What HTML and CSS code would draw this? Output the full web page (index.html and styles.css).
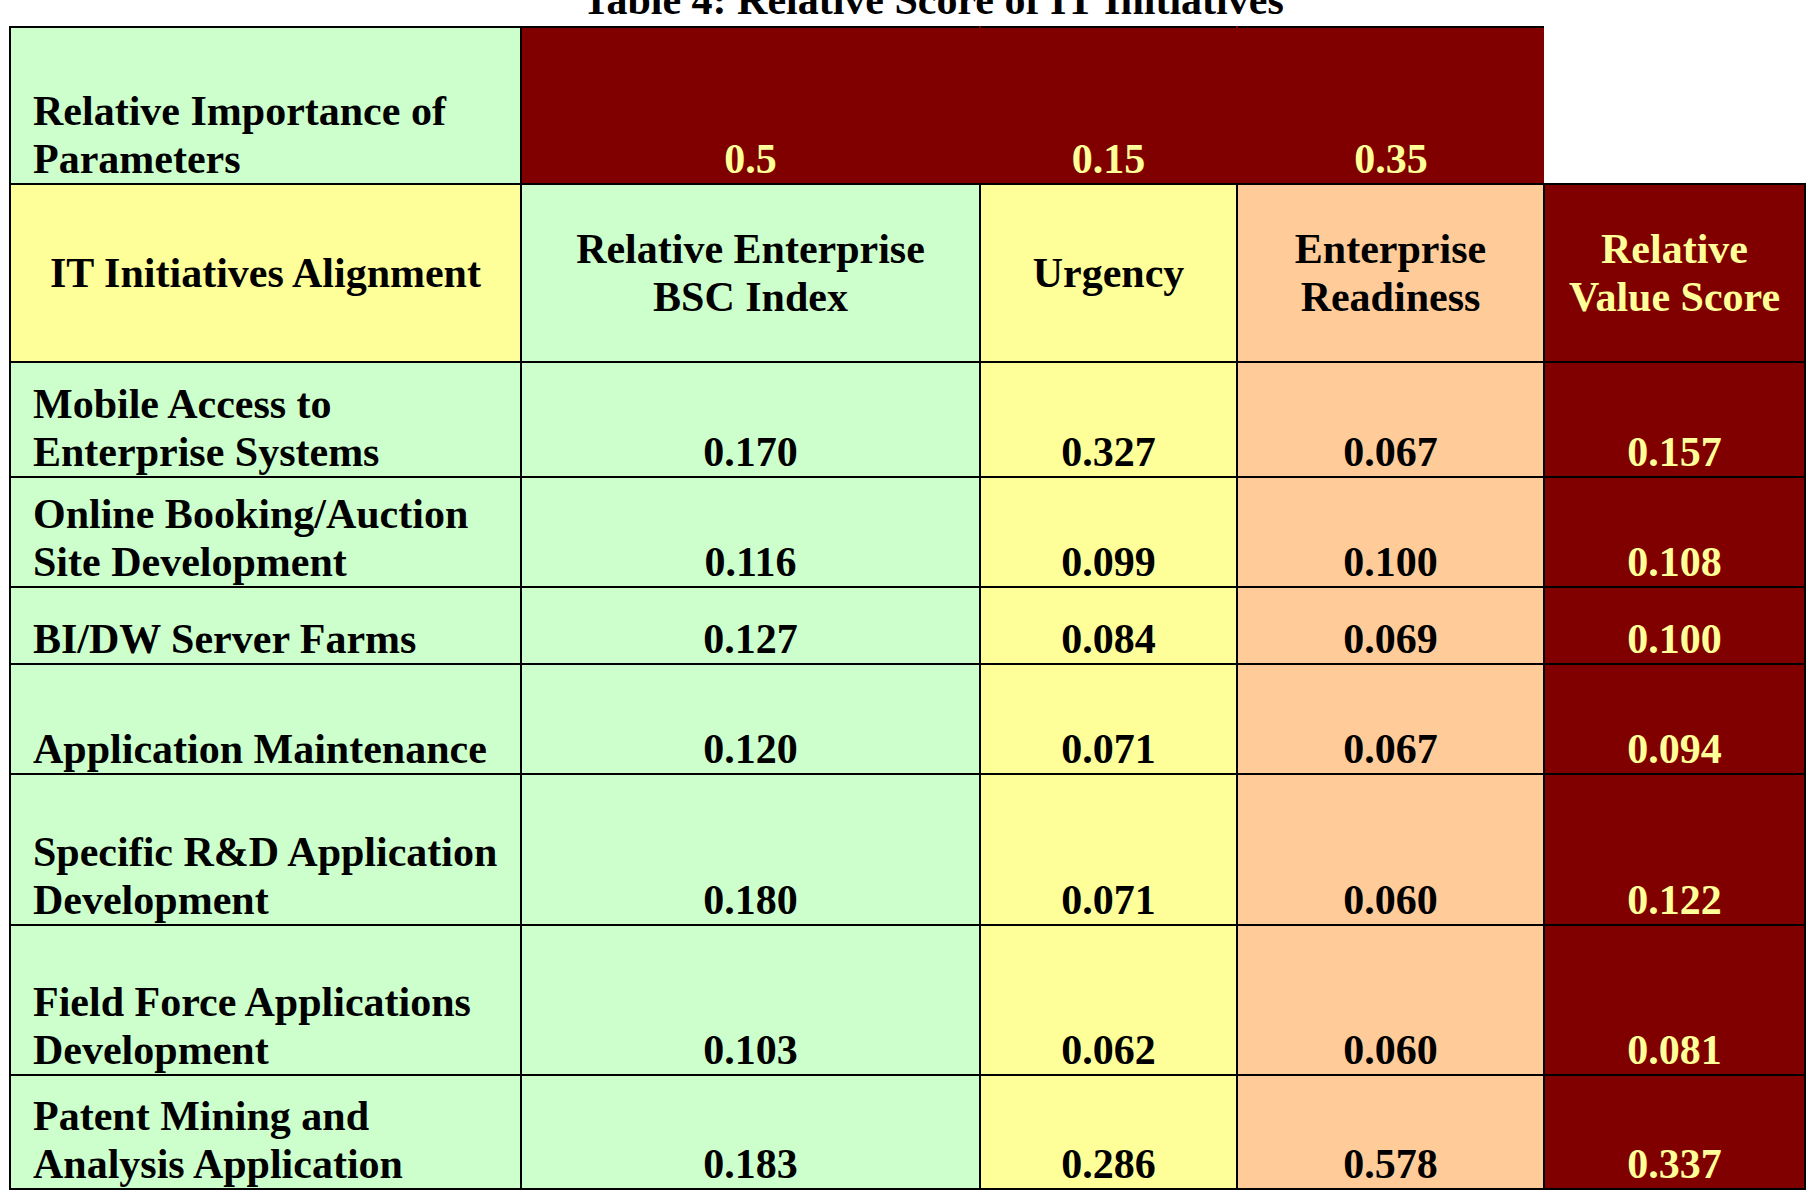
FILE: index.html
```html
<!DOCTYPE html>
<html>
<head>
<meta charset="utf-8">
<link rel="stylesheet" href="styles.css">
</head>
<body>
<div class="page">
  <div class="title">Table 4: Relative Score of IT Initiatives</div>
  <table class="scores">
    <colgroup>
      <col class="c0"><col class="c1"><col class="c2"><col class="c3"><col class="c4">
    </colgroup>
    <tr class="r-weights">
      <td class="label green">Relative Importance of<br>Parameters</td>
      <td class="weight w-first">0.5</td>
      <td class="weight w-mid">0.15</td>
      <td class="weight w-last">0.35</td>
      <td class="blank"></td>
    </tr>
    <tr class="r-head">
      <th class="yellow">IT Initiatives Alignment</th>
      <th class="green">Relative Enterprise<br>BSC Index</th>
      <th class="yellow">Urgency</th>
      <th class="peach">Enterprise<br>Readiness</th>
      <th class="maroon">Relative<br>Value Score</th>
    </tr>
    <tr class="r-a">
      <td class="label green">Mobile Access to<br>Enterprise Systems</td>
      <td class="num green">0.170</td>
      <td class="num yellow">0.327</td>
      <td class="num peach">0.067</td>
      <td class="num maroon">0.157</td>
    </tr>
    <tr class="r-b">
      <td class="label green">Online Booking/Auction<br>Site Development</td>
      <td class="num green">0.116</td>
      <td class="num yellow">0.099</td>
      <td class="num peach">0.100</td>
      <td class="num maroon">0.108</td>
    </tr>
    <tr class="r-c">
      <td class="label green">BI/DW Server Farms</td>
      <td class="num green">0.127</td>
      <td class="num yellow">0.084</td>
      <td class="num peach">0.069</td>
      <td class="num maroon">0.100</td>
    </tr>
    <tr class="r-d">
      <td class="label green">Application Maintenance</td>
      <td class="num green">0.120</td>
      <td class="num yellow">0.071</td>
      <td class="num peach">0.067</td>
      <td class="num maroon">0.094</td>
    </tr>
    <tr class="r-e">
      <td class="label green">Specific R&amp;D Application<br>Development</td>
      <td class="num green">0.180</td>
      <td class="num yellow">0.071</td>
      <td class="num peach">0.060</td>
      <td class="num maroon">0.122</td>
    </tr>
    <tr class="r-f">
      <td class="label green">Field Force Applications<br>Development</td>
      <td class="num green">0.103</td>
      <td class="num yellow">0.062</td>
      <td class="num peach">0.060</td>
      <td class="num maroon">0.081</td>
    </tr>
    <tr class="r-g">
      <td class="label green">Patent Mining and<br>Analysis Application</td>
      <td class="num green">0.183</td>
      <td class="num yellow">0.286</td>
      <td class="num peach">0.578</td>
      <td class="num maroon">0.337</td>
    </tr>
  </table>
</div>
</body>
</html>
```

FILE: styles.css
```css
html, body {
  margin: 0;
  padding: 0;
  background: #ffffff;
}

.page {
  padding-left: 9px;
  font-family: "Liberation Serif", "Times New Roman", serif;
  font-weight: bold;
  font-size: 42px;
  color: #000000;
  overflow: hidden;
  height: 1198px;
}

.title {
  width: 1797px;
  box-sizing: border-box;
  padding-left: 51px;
  text-align: center;
  line-height: 47px;
  height: 49px;
  margin-top: -23px;
  white-space: nowrap;
}

.scores {
  border-collapse: collapse;
  table-layout: fixed;
  width: 1797px;
}

.c0 { width: 511px; }
.c1 { width: 459px; }
.c2 { width: 257px; }
.c3 { width: 307px; }
.c4 { width: 261px; }

.scores td,
.scores th {
  border: 2px solid #000000;
  padding: 0 4px;
  line-height: 47.5px;
  white-space: nowrap;
  font-weight: bold;
}

.scores th {
  text-align: center;
  vertical-align: middle;
  line-height: 48px;
}

.green { background: #ccffcc; }
.yellow { background: #ffff99; }
.peach { background: #ffcc99; }
.maroon { background: #800000; color: #ffff99; }

.scores .label {
  text-align: left;
  vertical-align: bottom;
  padding-left: 22px;
}

.scores .num {
  text-align: center;
  vertical-align: bottom;
}

.scores .weight {
  background: #800000;
  color: #ffff99;
  text-align: center;
  vertical-align: bottom;
}

.scores .w-first { border-right-color: #800000; }
.scores .w-mid { border-left-color: #800000; border-right-color: #800000; }
.scores .w-last { border-left-color: #800000; border-right-style: none; }

.scores .blank {
  background: #ffffff;
  border-top-style: none;
  border-right-style: none;
  border-left-style: none;
}

.r-weights { height: 157px; }
.r-head { height: 178px; }
.r-a { height: 115px; }
.r-b { height: 110px; }
.r-c { height: 77px; }
.r-d { height: 110px; }
.r-e { height: 151px; }
.r-f { height: 150px; }
.r-g { height: 114px; }
```
